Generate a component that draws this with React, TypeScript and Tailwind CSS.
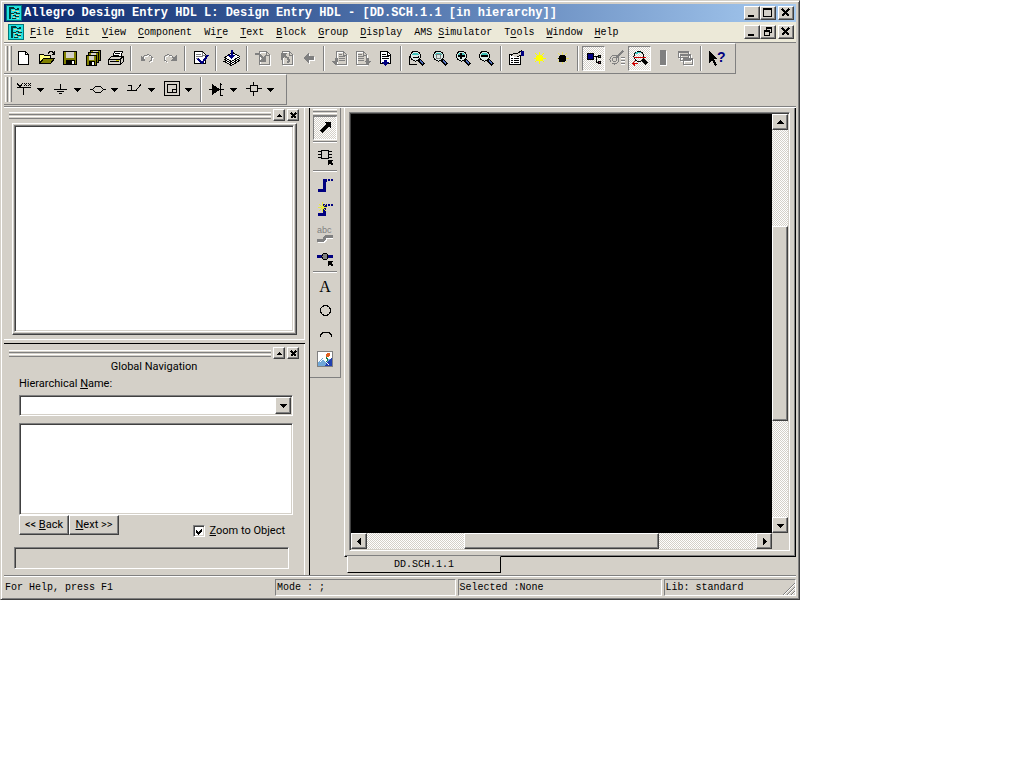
import clsx from "clsx";
import type { ReactNode } from "react";

const raised =
  "border border-t-white border-l-white border-r-[#404040] border-b-[#404040] bg-[#d4d0c8] shadow-[inset_-1px_-1px_0_#808080]";
const sunken =
  "border border-t-[#808080] border-l-[#808080] border-r-white border-b-white shadow-[inset_1px_1px_0_#404040,inset_-1px_-1px_0_#d4d0c8]";
const dither =
  "bg-[repeating-conic-gradient(#ffffff_0_25%,#d4d0c8_0_50%)] bg-[length:2px_2px]";
const mono = "font-['Liberation_Mono','DejaVu_Sans_Mono',monospace]";

function Icon({ size = 16, children }: { size?: number; children: ReactNode }) {
  return (
    <svg
      width={size}
      height={size}
      viewBox={`0 0 ${size} ${size}`}
      fill="none"
      stroke="#000"
      shapeRendering="crispEdges"
      className="block shrink-0 overflow-visible"
      aria-hidden="true"
    >
      {children}
    </svg>
  );
}

function Logo() {
  return (
    <Icon>
      <rect x="0.5" y="0.5" width="15" height="15" fill="#20e0e0" stroke="#007878" />
      <path d="M4 2v12" stroke="#004040" strokeWidth="2" />
      <path d="M5 3.5h4M5 8h3M9 4.5h4M8 7.5h3M10 8.5h4M7 10.5h3M9 11.5h4M6 13.5h4" stroke="#083838" />
      <path d="M5 3h3M11 4h2" stroke="#083838" strokeWidth="2" />
      <path d="M6 5.5h3M10 6.5h3M6 9.5h2M10 10.5h3M7 12.5h2M11 13.5h2" stroke="#d8d8a0" />
    </Icon>
  );
}

const disk = (x: number, y: number, s: number) => (
  <g>
    <rect x={x + 0.5} y={y + 0.5} width={s} height={s} fill="#808000" />
    <rect x={x + 3} y={y + 1} width={s - 5} height={s / 2 - 1} fill="#d4d0c8" stroke="none" />
    <rect x={x + 3} y={y + s - 4} width={s - 4} height="4" fill="#000" stroke="none" />
    <rect x={x + s - 4} y={y + s - 3} width="2" height="3" fill="#fff" stroke="none" />
  </g>
);

const lens = (mark: ReactNode) => (
  <Icon>
    <circle cx="6.5" cy="6" r="5" fill="#d8e8e4" />
    <path d="M3 4.5h7M4 3.5h5" stroke="#40c0b8" />
    {mark}
    <path d="M10 10l5 5" strokeWidth="3" />
    <path d="M11 10.5l3 3" stroke="#5070c0" />
  </Icon>
);

const grayPage = (arrow: ReactNode, lines = true) => (
  <Icon>
    <path d="M5.5 2.5h7l3 3v10h-10z" stroke="#fff" />
    <path d="M4.5 1.5h7l3 3v10h-10zM11.5 2v3h3" stroke="#808080" />
    {lines && <path d="M7 4.5h3M7 6.5h6M7 8.5h6M7 10.5h6" stroke="#808080" />}
    <g fill="#808080" stroke="#808080">
      {arrow}
    </g>
  </Icon>
);

const icons: Record<string, ReactNode> = {
  New: (
    <Icon>
      <path d="M2.5 1.5h7l3 3v10h-10z" fill="#fff" />
      <path d="M9.5 1.5v3h3" />
    </Icon>
  ),
  Open: (
    <Icon>
      <path d="M0.5 13.5v-9h4l1 1h6v3" fill="#ffff80" />
      <path d="M0.5 13.5l4-5h11l-4 5z" fill="#808000" />
      <path d="M9 3.5l2-2h2l2 2M15.5 1v3h-3" />
    </Icon>
  ),
  Save: <Icon>{disk(1, 1, 13)}</Icon>,
  "Save All": (
    <Icon>
      {disk(5, 0, 10)}
      {disk(3, 2, 10)}
      {disk(1, 5, 10)}
    </Icon>
  ),
  Print: (
    <Icon>
      <path d="M4.5 7.5l2-6h8l-2 6z" fill="#fff" />
      <path d="M7 3.5h5M6 5.5h5" />
      <path d="M0.5 9.5l3-3h12v5l-3 3h-12z" fill="#d4d0c8" />
      <path d="M1 9.5h11l3-3M12.5 10v4M2 11.5h9" />
      <path d="M8 10.5h3" stroke="#c0c000" />
    </Icon>
  ),
  Undo: (
    <Icon>
      <path d="M4 9.5c2-4 9-5 10-1 0 3-2 4-3 4" stroke="#fff" />
      <path d="M3 8.5c2-4 9-5 10-1 0 3-2 4-3 4" stroke="#808080" />
      <path d="M1.5 5v5.5h5z" fill="#808080" stroke="none" />
    </Icon>
  ),
  Redo: (
    <Icon>
      <path d="M13 9.5c-2-4-9-5-10-1 0 3 2 4 3 4" stroke="#fff" />
      <path d="M12 8.5c-2-4-9-5-10-1 0 3 2 4 3 4" stroke="#808080" />
      <path d="M14.5 5v5.5h-5z" fill="#808080" stroke="none" />
    </Icon>
  ),
  Check: (
    <Icon>
      <path d="M1.5 1.5h8l3 3v9h-11z" fill="#fff" />
      <path d="M3 4.5h5M3 6.5h7M3 8.5h3M9.5 2v3h3" stroke="#808080" />
      <path d="M5 9l4 4 6-8" stroke="#000080" strokeWidth="2" />
    </Icon>
  ),
  Import: (
    <Icon>
      <path d="M0.5 11.5l7 4 8-5-7-3z" fill="#fff" />
      <path d="M0.5 9.5l7 4 8-5-7-4z" fill="#fff" />
      <path d="M0.5 7.5l7 4 8-5-7-4z" fill="#fff" />
      <path d="M7.5 0v6" stroke="#000080" strokeWidth="2" />
      <path d="M4 5h7l-3.5 4z" fill="#000080" stroke="none" />
    </Icon>
  ),
  Descend: grayPage(
    <>
      <path d="M0 4h4l6 6" fill="none" strokeWidth="2" />
      <path d="M10.5 6v5h-5z" />
    </>,
    false,
  ),
  Ascend: grayPage(
    <>
      <path d="M10 13c2-4 0-6-6-8" fill="none" strokeWidth="2" />
      <path d="M3.5 9V3.5h5z" />
    </>,
    false,
  ),
  Back: (
    <Icon>
      <path d="M3 9l6-5v3h5v4h-5v3z" fill="#fff" stroke="none" />
      <path d="M2 8l6-5v3h5v4H8v3z" fill="#808080" stroke="none" />
    </Icon>
  ),
  "Previous Page": grayPage(
    <>
      <path d="M2.5 9h3" strokeWidth="3" />
      <path d="M0.5 11.5h5l-2 3z" />
    </>,
  ),
  "Next Page": (
    <Icon>
      <path d="M2.5 2.5h7l3 3v10h-10z" stroke="#fff" />
      <path d="M1.5 1.5h7l3 3v10h-10zM3 4.5h4M3 6.5h6M3 8.5h6M3 10.5h6M8.5 2v3h3" stroke="#808080" />
      <path d="M13 8v5" stroke="#808080" strokeWidth="2" />
      <path d="M10.5 11.5h5l-2.5 3z" fill="#808080" stroke="#808080" />
    </Icon>
  ),
  "Last Page": (
    <Icon>
      <path d="M2.5 1.5h7l3 3v9h-10z" fill="#fff" />
      <path d="M4 4.5h4M4 6.5h7M4 8.5h7M9.5 2v3h3" />
      <path d="M7.5 10v3" stroke="#000080" strokeWidth="3" />
      <path d="M3 12h9l-4.5 4z" fill="#000080" stroke="none" />
    </Icon>
  ),
  "Zoom Points": lens(<path d="M0.5 6v8.5h7M4 7.5h5v-2" />),
  "Zoom Fit": lens(<path d="M4.5 4.5h4v4h-4z" stroke="#808080" />),
  "Zoom In": lens(<path d="M3 6h7M6 3v6" strokeWidth="2" />),
  "Zoom Out": lens(<path d="M3 6h7" strokeWidth="2" />),
  Attributes: (
    <Icon>
      <path d="M0.5 4.5h11v10H0.5z" fill="#fff" />
      <path d="M2 8.5h2M5 8.5h5M2 10.5h2M5 10.5h5M2 12.5h2M5 12.5h5" />
      <path d="M2 6l3-3h4l3-2v4l-4 2" fill="#d4d0c8" />
      <path d="M12 1h3v5h-3z" fill="#000080" stroke="none" />
    </Icon>
  ),
  Highlight: (
    <Icon>
      <path d="M7.5 2v12M2 8h12M3 3l9 9M12 3l-9 9" stroke="#ffff00" />
      <circle cx="7.5" cy="8" r="3.5" fill="#ffff00" stroke="none" />
    </Icon>
  ),
  Dehighlight: (
    <Icon>
      <path d="M7.5 2v12M2 8h12M3 3l9 9M12 3l-9 9" stroke="#e8e060" />
      <circle cx="7.5" cy="8.5" r="4" fill="#000" stroke="none" />
    </Icon>
  ),
  Hierarchy: (
    <Icon>
      <path d="M1.5 3.5h6v6h-6z" fill="#000080" />
      <path d="M8 6.5h5M10.5 6v6.5h3" />
      <path d="M12.5 5.5h2v2h-2z" fill="#408060" />
      <path d="M12.5 11.5h2v2h-2z" fill="#a03060" />
    </Icon>
  ),
  Tracks: (
    <Icon>
      <circle cx="5.5" cy="9.5" r="4.5" stroke="#808080" />
      <circle cx="5.5" cy="9.5" r="2" stroke="#808080" />
      <path d="M7 8l7-7" stroke="#808080" strokeWidth="2" />
      <path d="M12 7.5h4M12 10.5h4M12 13.5h4" stroke="#808080" />
      <path d="M12 8.5h4M12 11.5h4M12 14.5h4" stroke="#fff" />
    </Icon>
  ),
  "Zoom Object": (
    <Icon>
      <circle cx="7" cy="6.5" r="5" />
      <path d="M3 3.5h3M4 2.5h5" stroke="#40c8c0" />
      <path d="M2 7.5h12M1 13.5h5M3 11l-2 2.500 2 2" stroke="#d00000" />
      <path d="M11 10l4 4" strokeWidth="3" />
    </Icon>
  ),
  Marker: (
    <Icon>
      <path d="M5 1h7v15H5z" fill="#fff" stroke="none" />
      <path d="M5 0h6v15H5z" fill="#808080" stroke="none" />
    </Icon>
  ),
  Cascade: (
    <Icon>
      <path d="M1.5 2.5h10v6h-10zM3.5 5.5h10v6h-10zM6.5 9.5h9v6h-9z" stroke="#fff" />
      <path d="M0.5 1.5h10v6h-10zM2.5 4.5h10v6h-10z" stroke="#808080" />
      <path d="M0 2h11M2 5h11M5 9h10" stroke="#808080" strokeWidth="2" />
      <path d="M5.5 8.5h9v6h-9z" stroke="#808080" />
    </Icon>
  ),
  Help: (
    <Icon>
      <path d="M0 1v12l3-3 3 6 2-1-3-6h4z" fill="#000" stroke="none" />
      <text x="8" y="12" fontSize="14" fontWeight="bold" fontFamily="Liberation Sans" fill="#000080" stroke="none">
        ?
      </text>
    </Icon>
  ),
  Power: (
    <Icon>
      <path d="M1 2l3 4 3-4M8 2l3 3M11 2l-3 3M12 2l3 3M15 2l-3 3" />
      <path d="M1 6.5h14M7.5 7v7" />
    </Icon>
  ),
  Ground: (
    <Icon>
      <path d="M7.5 3v5M1 8.5h13M4 10.5h7M6 12.5h3" />
    </Icon>
  ),
  Port: (
    <Icon>
      <path d="M0 8.5h3M13 8.5h3M2.5 8.5l3-3h5l3 3-3 3h-5z" />
    </Icon>
  ),
  Tap: (
    <Icon>
      <path d="M0 9.5h9l5-6M1 4.5h4M4.5 4v5" />
    </Icon>
  ),
  Block: (
    <Icon>
      <path d="M0.5 0.5h15v14H0.5zM3.5 3.5h9v8h-9zM8.5 11v-3h4" />
    </Icon>
  ),
  Diode: (
    <Icon>
      <path d="M0 8.5h15M11.5 2v13" />
      <path d="M3 3v11l8-5.5z" fill="#000" stroke="none" />
      <path d="M11 2l2 2M11 14l3 1" />
    </Icon>
  ),
  Resistor: (
    <Icon>
      <path d="M0 7.5h4M12 7.5h4M4.5 4.5h7v6h-7zM7.5 1v3M7.5 11v4" />
    </Icon>
  ),
  Select: (
    <Icon>
      <path d="M4 12l8-8" strokeWidth="3" />
      <path d="M7 2h7v7z" fill="#000" stroke="none" />
    </Icon>
  ),
  "Add Component": (
    <Icon>
      <path d="M4.5 1.5h7v8h-7zM1 2.5h3M1 5.5h3M1 8.5h3M12 2.5h3M12 5.5h3M12 8.5h3" />
      <path d="M11 11h5l-5 5z" fill="#000" stroke="none" />
      <path d="M12 12l4 4" strokeWidth="2" />
    </Icon>
  ),
  Wire: (
    <Icon>
      <path d="M1 12.5h6.500V2.5H10" stroke="#000080" strokeWidth="3" />
      <path d="M11 2h2M14 2h2" stroke="#000080" strokeWidth="2" />
    </Icon>
  ),
  Route: (
    <Icon>
      <path d="M1 12.5h6.500V3.5H10" stroke="#000080" strokeWidth="3" />
      <path d="M11 3h2M14 3h2" stroke="#000080" strokeWidth="2" />
      <path d="M5.5 0v10M1 5.5h9M2 2l7 7M9 2l-7 7" stroke="#e8e840" />
    </Icon>
  ),
  "Signal Name": (
    <Icon>
      <text x="0" y="7" fontSize="9" fontFamily="Liberation Sans" fill="#808080" stroke="none">
        abc
      </text>
      <path d="M1 15.5h6l3-4h6" stroke="#fff" strokeWidth="3" />
      <path d="M0 14.5h6l3-4h7" stroke="#808080" strokeWidth="3" />
    </Icon>
  ),
  Dot: (
    <Icon>
      <path d="M0 6.5h16" stroke="#000080" strokeWidth="3" />
      <circle cx="8" cy="6.5" r="3" fill="#808080" />
      <path d="M11 11h5l-5 5z" fill="#000" stroke="none" />
      <path d="M12 12l4 4" strokeWidth="2" />
    </Icon>
  ),
  Note: <span className="w-4 text-center font-['Liberation_Serif',serif] text-base leading-4">A</span>,
  Circle: (
    <Icon>
      <circle cx="8.5" cy="7.5" r="5" />
    </Icon>
  ),
  Arc: (
    <Icon>
      <path d="M3.5 10V8l2-2 2-1h3l2 1 2 2v2" />
    </Icon>
  ),
  Image: (
    <Icon>
      <path d="M0.5 0.5h15v15H0.5z" fill="#fff" stroke="#808080" />
      <path d="M1 12l4-5 4 3 3-3 3 4v4H1z" fill="#70a8d8" stroke="none" />
      <path d="M9 13l6-7v9h-7z" fill="#2040b0" stroke="none" />
      <path d="M3 11l3-3 3 3 3 3" stroke="#fff" />
      <path d="M9 6l2 3-2 2" stroke="#108050" />
      <circle cx="11" cy="4" r="2" fill="#e06020" stroke="none" />
    </Icon>
  ),
};

const mainTools = [
  ["New", "Open", "Save", "Save All", "Print"],
  ["Undo", "Redo"],
  ["Check"],
  ["Import"],
  ["Descend", "Ascend", "Back"],
  ["Previous Page", "Next Page", "Last Page"],
  ["Zoom Points", "Zoom Fit", "Zoom In", "Zoom Out"],
  ["Attributes", "Highlight", "Dehighlight"],
  ["Hierarchy", "Tracks", "Zoom Object", "Marker", "Cascade"],
  ["Help"],
];
const partTools = [
  ["Power", "Ground", "Port", "Tap", "Block"],
  ["Diode", "Resistor"],
];
const sideTools = [
  ["Select"],
  ["Add Component"],
  ["Wire", "Route", "Signal Name", "Dot"],
  ["Note", "Circle", "Arc", "Image"],
];
const pressed = ["Hierarchy", "Zoom Object", "Select"];

// label split around its underlined access key
const menus = [
  ["", "F", "ile"],
  ["", "E", "dit"],
  ["", "V", "iew"],
  ["", "C", "omponent"],
  ["Wi", "r", "e"],
  ["", "T", "ext"],
  ["", "B", "lock"],
  ["", "G", "roup"],
  ["", "D", "isplay"],
  ["AMS ", "S", "imulator"],
  ["T", "o", "ols"],
  ["", "W", "indow"],
  ["", "H", "elp"],
];

function ToolButton({ name, tall }: { name: string; tall?: boolean }) {
  return (
    <button
      type="button"
      aria-label={name}
      className={clsx(
        "flex shrink-0 items-start border pt-[3px] pl-[3px]",
        tall ? "h-6 w-6" : "h-[25px] w-[23px]",
        pressed.includes(name)
          ? "border-t-[#808080] border-l-[#808080] border-r-white border-b-white " + dither
          : "border-transparent",
      )}
    >
      {icons[name]}
    </button>
  );
}

function Arrow({ dir }: { dir: "up" | "down" | "left" | "right" }) {
  const paths = {
    up: "M4 2h1v1h1v1h1v1h1v1H1V5h1V4h1V3h1z",
    down: "M1 3h7v1H7v1H6v1H5v1H4V6H3V5H2V4H1z",
    left: "M6 1v7H5V7H4V6H3V5H2V4h1V3h1V2h1V1z",
    right: "M3 1v7h1V7h1V6h1V5h1V4H6V3H5V2H4V1z",
  };
  return (
    <svg width="9" height="9" viewBox="0 0 9 9" shapeRendering="crispEdges" aria-hidden="true">
      <path d={paths[dir]} fill="#000" />
    </svg>
  );
}

function Separator() {
  return (
    <div className="flex w-2 shrink-0 justify-center">
      <div className="w-[2px] border-r border-l border-r-white border-l-[#808080]" />
    </div>
  );
}

function Gripper() {
  return (
    <div className="flex w-2 shrink-0 gap-px pl-px">
      <div className="w-[3px] border-r border-l border-r-[#808080] border-l-white" />
      <div className="w-[3px] border-r border-l border-r-[#808080] border-l-white" />
    </div>
  );
}

function Toolbar({ groups, dropdown }: { groups: string[][]; dropdown?: boolean }) {
  return (
    <div
      role="toolbar"
      className="flex h-[31px] w-fit border border-t-white border-r-[#808080] border-b-[#808080] border-l-0 py-[2px] pr-[7px]"
    >
      <Gripper />
      {groups.map((group, i) => (
        <div key={i} className="flex">
          {i > 0 && <Separator />}
          {group.map((name) => (
            <div key={name} className="flex items-center">
              <ToolButton name={name} />
              {dropdown && (
                <button type="button" aria-label={`${name} list`} className="flex w-[14px] pl-px">
                  <Arrow dir="down" />
                </button>
              )}
            </div>
          ))}
        </div>
      ))}
    </div>
  );
}

function WindowButtons({ restore }: { restore?: boolean }) {
  const button = clsx(raised, "flex h-[14px] w-4 items-center justify-center");
  return (
    <div className="mr-[2px] ml-auto flex">
      <button type="button" aria-label="Minimize" className={button}>
        <Icon size={10}>
          <path d="M1 8h6" strokeWidth="2" />
        </Icon>
      </button>
      <button type="button" aria-label={restore ? "Restore" : "Maximize"} className={button}>
        <Icon size={10}>
          {restore ? (
            <path d="M3.5 3V1.5h5v4H7M3 1.5h6M3 0.5h6M1.5 4.5h5v4h-5zM1 3.5h6" />
          ) : (
            <path d="M0.5 0.5h8v8h-8zM0 1.5h9" />
          )}
        </Icon>
      </button>
      <button type="button" aria-label="Close" className={clsx(button, "ml-[2px]")}>
        <Icon size={10}>
          <path d="M1 1l7 7M8 1L1 8" strokeWidth="2" />
        </Icon>
      </button>
    </div>
  );
}

function PanelHeader() {
  return (
    <div className="flex items-center gap-[2px] pr-[5px] pl-[5px]">
      <div className="flex flex-1 flex-col gap-px">
        <div className="h-[3px] border-y border-t-white border-b-[#808080]" />
        <div className="h-[3px] border-y border-t-white border-b-[#808080]" />
      </div>
      <button type="button" aria-label="Expand" className={clsx(raised, "flex size-3 items-center justify-center")}>
        <svg width="5" height="3" viewBox="0 0 5 3" shapeRendering="crispEdges">
          <path d="M2 0h1v1h1v1h1v1H0V2h1V1h1z" />
        </svg>
      </button>
      <button type="button" aria-label="Close" className={clsx(raised, "flex size-3 items-center justify-center")}>
        <svg width="7" height="7" viewBox="0 0 7 7" stroke="#000" strokeWidth="2" shapeRendering="crispEdges">
          <path d="M1 1l5 5M6 1L1 6" />
        </svg>
      </button>
    </div>
  );
}

function ScrollBar({ vertical }: { vertical?: boolean }) {
  const button = clsx(raised, "flex size-4 shrink-0 items-center justify-center");
  return (
    <div className={clsx("flex", dither, vertical ? "w-4 flex-col" : "h-4 flex-1")}>
      <button type="button" aria-label={vertical ? "Scroll up" : "Scroll left"} className={button}>
        <Arrow dir={vertical ? "up" : "left"} />
      </button>
      <div className="flex-1" />
      <div className={clsx(raised, "flex-[2]")} />
      <div className="flex-1" />
      <button type="button" aria-label={vertical ? "Scroll down" : "Scroll right"} className={button}>
        <Arrow dir={vertical ? "down" : "right"} />
      </button>
    </div>
  );
}

function NavigationPanel() {
  return (
    <section className="border-r border-white pt-[3px] pb-[6px] font-['Roboto',sans-serif] text-[11px] leading-4">
      <PanelHeader />
      <h2 className="text-center">Global Navigation</h2>
      <div className="mr-[11px] ml-[15px] flex flex-col">
        <label htmlFor="hier" className="mt-px">
          Hierarchical <u>N</u>ame:
        </label>
        <div className={clsx(sunken, "mt-[3px] flex h-[21px] bg-white p-px")}>
          <select id="hier" className="min-w-0 flex-1 appearance-none bg-transparent px-1 outline-none">
            <option></option>
          </select>
          <span className={clsx(raised, "flex w-4 items-center justify-center")}>
            <Arrow dir="down" />
          </span>
        </div>
        <div role="listbox" aria-label="Instances" className={clsx(sunken, "mt-[7px] h-[92px] bg-white")} />
        <div className="flex items-start">
          <button type="button" className={clsx(raised, "h-5 w-[50px]")}>
            &lt;&lt; <u>B</u>ack
          </button>
          <button type="button" className={clsx(raised, "h-5 w-[50px]")}>
            <u>N</u>ext &gt;&gt;
          </button>
          <label className="mt-2 mr-2 ml-auto flex items-center gap-[5px]">
            <span className="grid size-3">
              <input
                type="checkbox"
                defaultChecked
                className={clsx(sunken, "peer col-start-1 row-start-1 size-3 appearance-none bg-white")}
              />
              <svg
                viewBox="0 0 12 12"
                className="pointer-events-none invisible col-start-1 row-start-1 size-3 peer-checked:visible"
                shapeRendering="crispEdges"
              >
                <path d="M3 5l2 2 4-4v3L5 10 3 8z" />
              </svg>
            </span>
            <span>
              <u>Z</u>oom to Object
            </span>
          </label>
        </div>
      </div>
      <div className={clsx(sunken, "mt-2 mr-[15px] ml-[10px] h-[22px]")} />
    </section>
  );
}

function SideToolbar() {
  return (
    <div className="ml-1 border-l border-black">
      <div
        role="toolbar"
        className="flex w-[31px] flex-col border-r border-b border-[#808080] px-[3px] pt-px pb-[6px]"
      >
        <div className="flex flex-col gap-px">
          <div className="h-[3px] border-y border-t-white border-b-[#808080]" />
          <div className="h-[3px] border-y border-t-white border-b-[#808080]" />
        </div>
        {sideTools.map((group, i) => (
          <div key={i}>
            {i > 0 && (
              <div className="flex h-[5px] pt-px">
                <div className="h-[2px] w-full border-y border-t-[#808080] border-b-white" />
              </div>
            )}
            {group.map((name) => (
              <ToolButton key={name} name={name} tall />
            ))}
          </div>
        ))}
      </div>
    </div>
  );
}

export default function App() {
  const field = "flex items-center border border-t-[#808080] border-l-[#808080] border-r-white border-b-white pl-px";
  return (
    <div className="min-h-screen bg-white">
      <div
        className={clsx(
          "flex min-h-[600px] w-full max-w-[800px] flex-col border border-[#d4d0c8] border-r-[#404040] border-b-[#404040] bg-[#d4d0c8] p-[3px] text-[10px] leading-3 text-black shadow-[inset_1px_1px_0_#fff,inset_-1px_-1px_0_#808080]",
          mono,
        )}
      >
        <header className="flex h-[18px] items-center bg-linear-to-r from-[#0a246a] to-[#a6caf0] pl-[2px]">
          <Logo />
          <h1 className="ml-[2px] text-xs font-bold whitespace-nowrap text-white">
            Allegro Design Entry HDL L: Design Entry HDL - [DD.SCH.1.1 [in hierarchy]]
          </h1>
          <WindowButtons />
        </header>
        <nav className="flex h-5 items-center bg-[#ece9d8] pl-1">
          <Logo />
          <div className="flex pt-[2px]">
            {menus.map(([before, key, after]) => (
              <button key={before + key + after} type="button" className="px-[6px] whitespace-pre">
                {before}
                <u className="underline-offset-2">{key}</u>
                {after}
              </button>
            ))}
          </div>
          <WindowButtons restore />
        </nav>
        <div className="border-t border-b border-t-[#808080] border-b-[#808080] pb-px">
          <Toolbar groups={mainTools} />
          <Toolbar groups={partTools} dropdown />
        </div>

        <main className="flex flex-1 border-t border-white">
          <div className="flex w-[301px] shrink-0 flex-col">
            <section className="flex flex-1 flex-col border-r border-b border-white pt-px">
              <PanelHeader />
              <div className={clsx(raised, "mt-[2px] mr-[7px] mb-1 ml-2 flex flex-1 p-px pr-[2px] pb-[2px]")}>
                <div className={clsx(sunken, "flex-1 bg-white")} />
              </div>
            </section>
            <div className="h-1 border-b border-black" />
            <NavigationPanel />
          </div>
          <SideToolbar />
          <div className="ml-[3px] flex flex-1 flex-col">
            <div className="flex flex-1 flex-col border border-t-0 border-r-black border-b-black border-l-white pt-1 pr-[5px] pb-[5px] pl-1 shadow-[inset_-1px_-1px_0_#808080]">
              <div className={clsx(sunken, "flex flex-1 flex-col p-px")}>
                <div className="flex flex-1">
                  <div className="flex-1 bg-black" />
                  <ScrollBar vertical />
                </div>
                <div className="flex">
                  <ScrollBar />
                  <div className="size-4" />
                </div>
              </div>
            </div>
            <button
              type="button"
              className="-mt-px mb-[2px] ml-[3px] h-[17px] w-[154px] border border-t-[#d4d0c8] border-r-black border-b-black border-l-white bg-[#d4d0c8]"
            >
              DD.SCH.1.1
            </button>
          </div>
        </main>

        <footer className="flex h-[21px] gap-[2px] border-t border-[#808080] pt-[3px] shadow-[inset_0_1px_0_#fff]">
          <div className="flex w-[269px] shrink-0 items-center pl-px">For Help, press F1</div>
          <div className={clsx(field, "flex-[181]")}>Mode : ;</div>
          <div className={clsx(field, "flex-[205]")}>Selected :None</div>
          <div className={clsx(field, "flex-[132]")}>
            Lib: standard
            <svg width="12" height="12" viewBox="0 0 12 12" className="mt-auto ml-auto" stroke="#808080" aria-hidden="true">
              <path d="M0 12L12 0M4 12l8-8M8 12l4-4" />
              <path d="M1 12L12 1M5 12l7-7M9 12l3-3" stroke="#fff" />
            </svg>
          </div>
        </footer>
      </div>
    </div>
  );
}
